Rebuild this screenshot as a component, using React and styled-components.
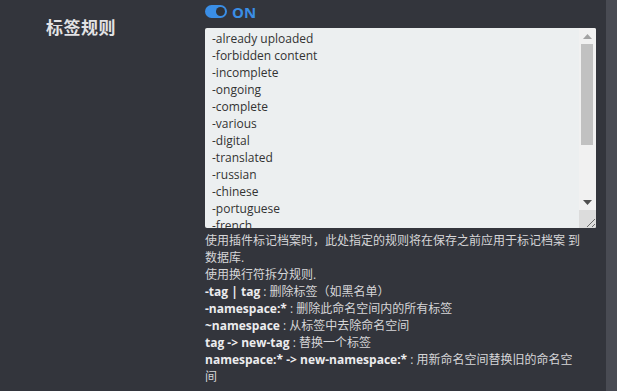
import styled, { createGlobalStyle } from 'styled-components';

const GlobalStyle = createGlobalStyle`
  html, body {
    margin: 0;
    padding: 0;
    background: #33353c;
    overflow: hidden;
  }
  body {
    font-family: "Open Sans", "Noto Sans CJK SC", sans-serif;
  }
`;

const Page = styled.div`
  display: flex;
  width: 617px;
  height: 391px;
  background: #33353c;
`;

const Content = styled.div`
  flex: 1;
  display: flex;
  padding-top: 2px;
`;

const SideStrip = styled.div`
  width: 11px;
  background: #494b53;
`;

const LabelCol = styled.div`
  width: 159px;
  padding-left: 46px;
  padding-top: 12px;
`;

const Label = styled.div`
  font-size: 17px;
  font-weight: bold;
  color: #e2e2e4;
  letter-spacing: 0.5px;
`;

const FieldCol = styled.div`
  width: 391px;
  display: flex;
  flex-direction: column;
`;

const ToggleRow = styled.div`
  display: flex;
  align-items: center;
  gap: 5px;
  height: 19px;
  margin-bottom: 7px;
`;

const Switch = styled.div`
  width: 22px;
  height: 13px;
  border-radius: 7px;
  background: #3a8ee6;
  display: flex;
  align-items: center;
  justify-content: flex-end;
  padding: 0 2px;
  box-sizing: border-box;
`;

const Knob = styled.div`
  width: 9px;
  height: 9px;
  border-radius: 50%;
  background: #2f3238;
`;

const OnText = styled.span`
  color: #3a8ee6;
  font-weight: bold;
  font-size: 15px;
`;

const RulesBox = styled.div`
  display: flex;
  width: 391px;
  height: 200px;
  background: #eceff0;
  border-radius: 2px;
  overflow: hidden;
`;

const Rules = styled.textarea`
  flex: 1;
  height: 100%;
  box-sizing: border-box;
  background: transparent;
  border: none;
  padding: 2px 7px;
  font-family: "Open Sans", "Noto Sans CJK SC", sans-serif;
  font-size: 12px;
  line-height: 17px;
  color: #333;
  resize: none;
  outline: none;
  overflow: hidden;
`;

const ScrollCol = styled.div`
  width: 17px;
  display: flex;
  flex-direction: column;
  background: #f1f1f1;
`;

const ArrowBtn = styled.div`
  height: 16px;
  display: flex;
  align-items: center;
  justify-content: center;
  flex-shrink: 0;
`;

const Track = styled.div`
  flex: 1;
  padding: 0 3px 0 2px;
`;

const Thumb = styled.div`
  height: 101px;
  background: #c1c1c1;
`;

const Corner = styled.div`
  height: 18px;
  background: #dcdcdc;
  display: flex;
  align-items: flex-end;
  justify-content: flex-end;
  flex-shrink: 0;
`;

const Help = styled.div`
  margin-top: 4px;
  width: 376px;
  font-size: 12px;
  line-height: 17px;
  color: #d6d6d8;
`;

const Line = styled.div``;

const Code = styled.b`
  color: #ececee;
`;

const rules = [
  '-already uploaded',
  '-forbidden content',
  '-incomplete',
  '-ongoing',
  '-complete',
  '-various',
  '-digital',
  '-translated',
  '-russian',
  '-chinese',
  '-portuguese',
  '-french',
  '-spanish',
  '-italian',
  '-vietnamese',
  '-german',
  '-indonesian',
  '-korean',
].join('\n');

export default function App() {
  return (
    <>
      <GlobalStyle />
      <Page>
        <Content>
          <LabelCol>
            <Label>标签规则</Label>
          </LabelCol>
          <FieldCol>
            <ToggleRow>
              <Switch>
                <Knob />
              </Switch>
              <OnText>ON</OnText>
            </ToggleRow>
            <RulesBox>
              <Rules defaultValue={rules} spellCheck={false} />
              <ScrollCol>
                <ArrowBtn>
                  <svg width="9" height="5" viewBox="0 0 9 5">
                    <path d="M4.5 0 L9 5 L0 5 Z" fill="#a3a3a3" />
                  </svg>
                </ArrowBtn>
                <Track>
                  <Thumb />
                </Track>
                <ArrowBtn>
                  <svg width="9" height="5" viewBox="0 0 9 5">
                    <path d="M0 0 L9 0 L4.5 5 Z" fill="#505050" />
                  </svg>
                </ArrowBtn>
                <Corner>
                  <svg width="12" height="12" viewBox="0 0 12 12">
                    <path d="M11 3 L3 11 M11 8 L8 11" stroke="#6a6a6a" strokeWidth="1" />
                  </svg>
                </Corner>
              </ScrollCol>
            </RulesBox>
            <Help>
              <Line>使用插件标记档案时，此处指定的规则将在保存之前应用于标记档案 到数据库.</Line>
              <Line>使用换行符拆分规则.</Line>
              <Line><Code>-tag | tag</Code> : 删除标签（如黑名单）</Line>
              <Line><Code>-namespace:*</Code> : 删除此命名空间内的所有标签</Line>
              <Line><Code>~namespace</Code> : 从标签中去除命名空间</Line>
              <Line><Code>tag -&gt; new-tag</Code> : 替换一个标签</Line>
              <Line><Code>namespace:* -&gt; new-namespace:*</Code> : 用新命名空间替换旧的命名空间</Line>
            </Help>
          </FieldCol>
        </Content>
        <SideStrip />
      </Page>
    </>
  );
}
